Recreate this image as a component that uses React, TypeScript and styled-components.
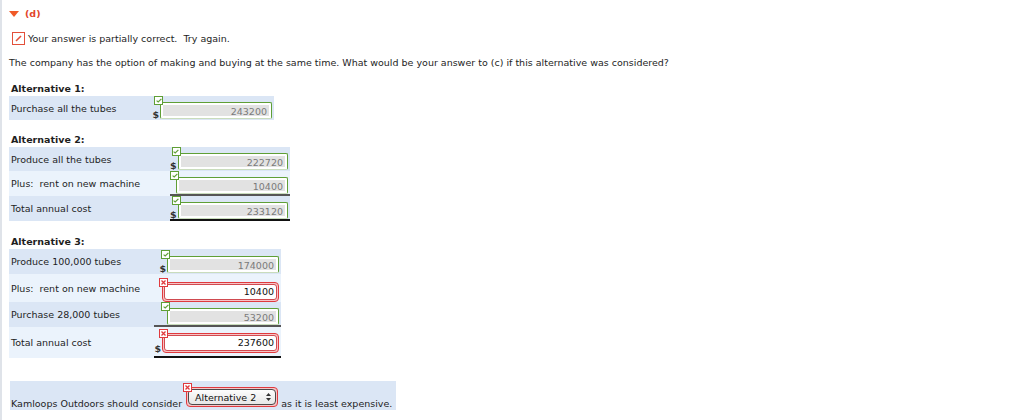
import React from 'react'
import styled, { createGlobalStyle } from 'styled-components'

const GlobalStyle = createGlobalStyle`
  html, body {
    margin: 0;
    background: #fff;
  }
  body {
    font-family: "DejaVu Sans", Verdana, sans-serif;
    font-size: 9.5px;
    color: #1e1e1e;
  }
`

const Page = styled.div`
  min-height: 420px;
  box-sizing: border-box;
  border-left: 2px solid #dfe3e9;
  padding: 8px 0 0 6px;
`

const PartHeader = styled.div`
  display: flex;
  align-items: center;
  gap: 6px;
  margin-left: 1px;
  height: 11px;
  font-weight: bold;
  color: #e2452b;
`

const Caret = styled.span`
  width: 0;
  height: 0;
  border-left: 5px solid transparent;
  border-right: 5px solid transparent;
  border-top: 6px solid #f05a28;
`

const Feedback = styled.div`
  display: flex;
  align-items: center;
  gap: 3px;
  margin: 13px 0 0 4px;
`

const EditBox = styled.span`
  display: inline-flex;
  align-items: center;
  justify-content: center;
  width: 13px;
  height: 13px;
  box-sizing: border-box;
  border: 1px solid #e3503a;
  background: #fff;
`

const Prompt = styled.p`
  margin: 12px 0 0 1px;
`

const Heading = styled.div`
  font-weight: bold;
  margin: 0 0 2px 3px;
`

const Section = styled.div<{ $top: number }>`
  margin-top: ${p => p.$top}px;
`

const Row = styled.div<{ $cols: string; $light?: boolean }>`
  display: grid;
  grid-template-columns: ${p => p.$cols};
  width: max-content;
  margin-left: 1px;
  background: ${p => (p.$light ? '#ebf3fc' : '#dbe6f5')};
`

const Label = styled.div`
  align-self: center;
  padding-left: 2px;
  white-space: pre;
`

const ValueCell = styled.div<{ $rule?: 'thin' | 'thick'; $pt: number; $pb: number }>`
  display: flex;
  justify-content: flex-end;
  align-items: flex-end;
  gap: 1px;
  padding: ${p => p.$pt}px 2px ${p => p.$pb}px 0;
  margin-left: 2px;
  border-bottom: ${p =>
    p.$rule === 'thick' ? '2px solid #111' : p.$rule === 'thin' ? '2px solid #555' : 'none'};
`

const Dollar = styled.span`
  font-weight: bold;
  line-height: 10px;
  margin-bottom: -1px;
  color: #333;
`

const Frame = styled.div<{ $bad?: boolean; $w: number }>`
  position: relative;
  width: ${p => p.$w}px;
  height: ${p => (p.$bad ? 20 : 17)}px;
  box-sizing: border-box;
  padding: 1px;
  border: 1px solid ${p => (p.$bad ? '#e03a3e' : '#5f9f36')};
  border-bottom-color: ${p => (p.$bad ? '#e03a3e' : '#c9dcbc')};
  border-radius: ${p => (p.$bad ? 4 : 2)}px;
  background: ${p => (p.$bad ? '#f7c4c6' : '#fff')};
`

const InputBox = styled.div<{ $bad?: boolean }>`
  height: 100%;
  box-sizing: border-box;
  padding-right: 2px;
  text-align: right;
  line-height: ${p => (p.$bad ? 14 : 13)}px;
  font-size: 9.5px;
  color: ${p => (p.$bad ? '#111' : '#7a7a7a')};
  background: ${p => (p.$bad ? '#fff' : '#e2e2e2')};
  border: 1px solid ${p => (p.$bad ? '#d04a50' : '#fff')};
  border-radius: ${p => (p.$bad ? 3 : 1)}px;
`

const Mark = styled.span<{ $bad?: boolean }>`
  position: absolute;
  left: ${p => (p.$bad ? -4 : -7)}px;
  top: ${p => (p.$bad ? -5 : -7)}px;
  width: 9px;
  height: 9px;
  box-sizing: border-box;
  display: flex;
  align-items: center;
  justify-content: center;
  background: #fff;
  border: 1px solid ${p => (p.$bad ? '#e03a3e' : '#5f9f36')};
  z-index: 1;
`

const Band = styled.div`
  display: flex;
  align-items: flex-end;
  gap: 3px;
  width: 385px;
  margin: 23px 0 0 2px;
  padding: 6px 0 1px 1px;
  background: #dbe6f5;
  white-space: nowrap;
`

const SelectFrame = styled.div`
  position: relative;
  margin: 0 0 2px 1px;
  padding: 1px;
  border: 1px solid #e03a3e;
  border-radius: 4px;
  background: #f7c4c6;
`

const SelectBox = styled.div`
  display: flex;
  align-items: center;
  gap: 10px;
  height: 16px;
  box-sizing: border-box;
  padding: 0 4px 0 6px;
  border: 1px solid #4a4a4a;
  border-radius: 4px;
  background: linear-gradient(#fdfdfd, #e6e6e6);
  color: #111;
`

const CheckIcon = () => (
  <svg width="6" height="5" viewBox="0 0 6 5">
    <path d="M0.6 2.6 L2.2 4 L5.4 0.8" fill="none" stroke="#5f9f36" strokeWidth="1.2" />
  </svg>
)

const CrossIcon = () => (
  <svg width="5" height="5" viewBox="0 0 5 5">
    <path d="M0.5 0.5 L4.5 4.5 M4.5 0.5 L0.5 4.5" fill="none" stroke="#e03a3e" strokeWidth="1.3" />
  </svg>
)

const Arrows = () => (
  <svg width="5" height="8" viewBox="0 0 5 8">
    <path d="M2.5 0 L5 3 L0 3 Z M2.5 8 L5 5 L0 5 Z" fill="#333" />
  </svg>
)

type FieldProps = { value: string; bad?: boolean; w: number }

const Field = ({ value, bad, w }: FieldProps) => (
  <Frame $bad={bad} $w={bad ? w + 5 : w}>
    <Mark $bad={bad}>{bad ? <CrossIcon /> : <CheckIcon />}</Mark>
    <InputBox $bad={bad}>{value}</InputBox>
  </Frame>
)

type Line = {
  label: string
  value: string
  dollar?: boolean
  bad?: boolean
  rule?: 'thin' | 'thick'
  pt: number
  pb: number
}

const Block = ({ title, cols, w, lines }: { title: string; cols: string; w: number; lines: Line[] }) => (
  <>
    <Heading>{title}</Heading>
    {lines.map((l, i) => (
      <Row key={l.label} $cols={cols} $light={i % 2 === 1}>
        <Label>{l.label}</Label>
        <ValueCell $rule={l.rule} $pt={l.pt} $pb={l.pb}>
          {l.dollar && <Dollar>$</Dollar>}
          <Field value={l.value} bad={l.bad} w={w} />
        </ValueCell>
      </Row>
    ))}
  </>
)

export default function App() {
  return (
    <>
      <GlobalStyle />
      <Page>
        <PartHeader>
          <Caret />
          <span>(d)</span>
        </PartHeader>
        <Feedback>
          <EditBox>
            <svg width="7" height="7" viewBox="0 0 7 7">
              <path d="M1 6 L6 1" stroke="#e3503a" strokeWidth="1.6" />
            </svg>
          </EditBox>
          <span>Your answer is partially correct.&nbsp; Try again.</span>
        </Feedback>
        <Prompt>
          The company has the option of making and buying at the same time. What would be your answer to (c) if this
          alternative was considered?
        </Prompt>

        <Section $top={15}>
          <Block
            title="Alternative 1:"
            cols="141px 124px"
            w={112}
            lines={[{ label: 'Purchase all the tubes', value: '243200', dollar: true, pt: 6, pb: 1 }]}
          />
        </Section>

        <Section $top={14}>
          <Block
            title="Alternative 2:"
            cols="159px 122px"
            w={112}
            lines={[
              { label: 'Produce all the tubes', value: '222720', dollar: true, pt: 6, pb: 1 },
              { label: 'Plus:  rent on new machine', value: '10400', rule: 'thin', pt: 6, pb: 0 },
              { label: 'Total annual cost', value: '233120', dollar: true, rule: 'thick', pt: 6, pb: 0 },
            ]}
          />
        </Section>

        <Section $top={15}>
          <Block
            title="Alternative 3:"
            cols="143px 129px"
            w={112}
            lines={[
              { label: 'Produce 100,000 tubes', value: '174000', dollar: true, pt: 7, pb: 1 },
              { label: 'Plus:  rent on new machine', value: '10400', bad: true, pt: 8, pb: 0 },
              { label: 'Purchase 28,000 tubes', value: '53200', rule: 'thin', pt: 6, pb: 0 },
              { label: 'Total annual cost', value: '237600', dollar: true, bad: true, rule: 'thick', pt: 6, pb: 3 },
            ]}
          />
        </Section>

        <Band>
          <span>Kamloops Outdoors should consider</span>
          <SelectFrame>
            <Mark $bad>
              <CrossIcon />
            </Mark>
            <SelectBox>
              <span>Alternative 2</span>
              <Arrows />
            </SelectBox>
          </SelectFrame>
          <span>as it is least expensive.</span>
        </Band>
      </Page>
    </>
  )
}
